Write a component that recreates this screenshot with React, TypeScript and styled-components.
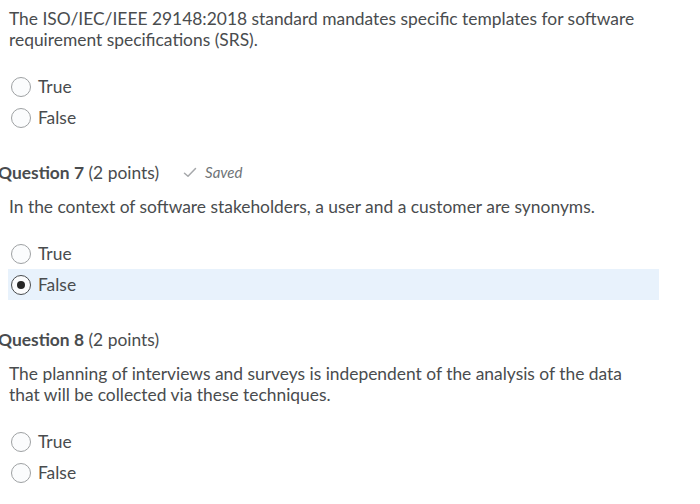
import { FC } from 'react'
import styled, { createGlobalStyle } from 'styled-components'

const GlobalStyle = createGlobalStyle`
  html, body {
    margin: 0;
    padding: 0;
    background: #ffffff;
  }
  body {
    font-family: Lato, 'Open Sans', sans-serif;
    color: #494c4e;
  }
`

type Question = {
  number?: number
  points?: number
  saved?: boolean
  text: string
  selected?: 'True' | 'False'
}

const questions: Question[] = [
  {
    text: 'The ISO/IEC/IEEE 29148:2018 standard mandates specific templates for software requirement specifications (SRS).',
  },
  {
    number: 7,
    points: 2,
    saved: true,
    text: 'In the context of software stakeholders, a user and a customer are synonyms.',
    selected: 'False',
  },
  {
    number: 8,
    points: 2,
    text: 'The planning of interviews and surveys is independent of the analysis of the data that will be collected via these techniques.',
  },
]

const CheckIcon = () => (
  <svg width="14" height="11" viewBox="0 0 14 11" fill="none">
    <path d="M1.5 6.2 L5 9.3 L12.5 1.5" stroke="#a6a8ab" strokeWidth="1.5" strokeLinecap="round" strokeLinejoin="round" />
  </svg>
)

export default function App() {
  return (
    <>
      <GlobalStyle />
      <Page>
        {questions.map((q, i) => (
          <QuestionBlock key={i}>
            {q.number && (
              <Header>
                <HeaderTitle>
                  <strong>Question {q.number}</strong> ({q.points} points)
                </HeaderTitle>
                {q.saved && (
                  <SavedTag>
                    <CheckIcon />
                    <em>Saved</em>
                  </SavedTag>
                )}
              </Header>
            )}
            <Prompt>{q.text}</Prompt>
            <Options>
              {(['True', 'False'] as const).map(opt => (
                <Option key={opt} label={opt} checked={q.selected === opt} />
              ))}
            </Options>
          </QuestionBlock>
        ))}
      </Page>
    </>
  )
}

const Option: FC<{ label: string; checked: boolean }> = ({ label, checked }) => (
  <OptionRow $checked={checked}>
    <Radio $checked={checked} />
    <OptionLabel>{label}</OptionLabel>
  </OptionRow>
)

const Page = styled.div`
  width: 700px;
  height: 504px;
  overflow: hidden;
  padding: 8px 0 0 9px;
  box-sizing: border-box;
`

const QuestionBlock = styled.section`
  margin-bottom: 28px;
`

const Header = styled.div`
  display: flex;
  align-items: center;
  margin-left: -11px;
  margin-bottom: 13px;
  height: 22px;
`

const HeaderTitle = styled.div`
  font-size: 17.4px;
  color: #494c4e;

  strong {
    font-weight: 700;
  }
`

const SavedTag = styled.div`
  display: flex;
  align-items: center;
  gap: 8px;
  margin-left: 24px;
  font-size: 15px;
  color: #6e7376;

  em {
    font-style: italic;
  }
`

const Prompt = styled.p`
  margin: 0 0 21px;
  font-size: 17.4px;
  line-height: 21px;
  width: 640px;
`

const Options = styled.div`
  display: flex;
  flex-direction: column;
  margin-left: -1px;
`

const OptionRow = styled.label<{ $checked: boolean }>`
  display: flex;
  align-items: center;
  width: 651px;
  height: 31px;
  padding-left: 3px;
  box-sizing: border-box;
  background: ${p => (p.$checked ? '#e8f2fc' : 'transparent')};
`

const Radio = styled.span<{ $checked: boolean }>`
  position: relative;
  width: 20px;
  height: 20px;
  border-radius: 50%;
  box-sizing: border-box;
  border: 1px solid ${p => (p.$checked ? '#494c4e' : '#9ea1a3')};
  background: #fbfcfd;
  flex-shrink: 0;

  &::after {
    content: '';
    display: ${p => (p.$checked ? 'block' : 'none')};
    position: absolute;
    left: 5px;
    top: 5px;
    width: 8px;
    height: 8px;
    border-radius: 50%;
    background: #262626;
  }
`

const OptionLabel = styled.span`
  margin-left: 7px;
  font-size: 17.4px;
  color: #494c4e;
`
